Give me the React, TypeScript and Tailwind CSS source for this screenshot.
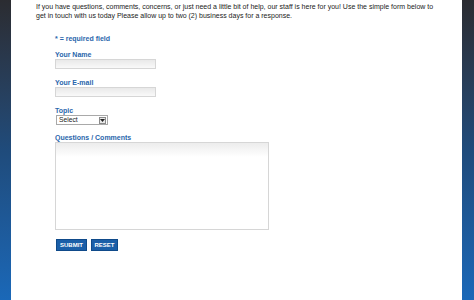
const label = "block text-[7px] font-bold leading-[9px] text-[#2a66ac]";
const field =
  "block h-[10px] w-[101px] border border-[#d6d6d6] bg-gradient-to-b from-[#e9e9e9] to-[#f9f9f9]";

export default function App() {
  return (
    <div className="flex h-[300px] w-[474px] bg-white font-['Liberation_Sans',Arial,sans-serif]">
      <div className="w-[11px] shrink-0 bg-gradient-to-b from-[#2b2c31] via-[#1f4b7b] to-[#1a68b8]" />
      <div className="flex-1 pl-[25px] pt-[3px]">
        <p className="w-[398px] text-[7px] leading-[8.5px] text-[#222]">
          If you have questions, comments, concerns, or just need a little bit of help, our staff
          is here for you! Use the simple form below to get in touch with us today Please allow up
          to two (2) business days for a response.
        </p>

        <form className="ml-[19px] mt-[14px] flex flex-col">
          <span className={label}>* = required field</span>

          <label className={`${label} mt-[7px]`}>Your Name</label>
          <input className={field} />

          <label className={`${label} mt-[9px]`}>Your E-mail</label>
          <input className={field} />

          <label className={`${label} mt-[9px]`}>Topic</label>
          <div className="ml-[1px] flex h-[10px] w-[52px] items-center justify-between border border-[#a9a9a9] bg-white pl-[2px] pr-[1px]">
            <span className="text-[6.7px] leading-none text-[#222]">Select</span>
            <span className="flex h-[7px] w-[7px] items-center justify-center border border-[#8a8a8a] bg-[#e8e8e8]">
              <svg width="5" height="3" viewBox="0 0 5 3">
                <path d="M0 0h5L2.5 3z" fill="#222" />
              </svg>
            </span>
          </div>

          <label className={`${label} mt-[8px]`}>Questions / Comments</label>
          <textarea className="block h-[88px] w-[214px] resize-none border border-[#d6d6d6] bg-[linear-gradient(#ececec,#ffffff_14px)]" />

          <div className="mt-[9px] ml-[1px] flex gap-[4px]">
            <button
              type="button"
              className="h-[12px] w-[31px] border border-[#0f4a8a] bg-[#1b5fa8] text-[6px] font-bold leading-none text-white"
            >
              SUBMIT
            </button>
            <button
              type="button"
              className="h-[12px] w-[27px] border border-[#0f4a8a] bg-[#1b5fa8] text-[6px] font-bold leading-none text-white"
            >
              RESET
            </button>
          </div>
        </form>
      </div>
      <div className="w-[12px] shrink-0 bg-gradient-to-b from-[#2b2c31] via-[#1f4b7b] to-[#1a68b8]" />
    </div>
  );
}
